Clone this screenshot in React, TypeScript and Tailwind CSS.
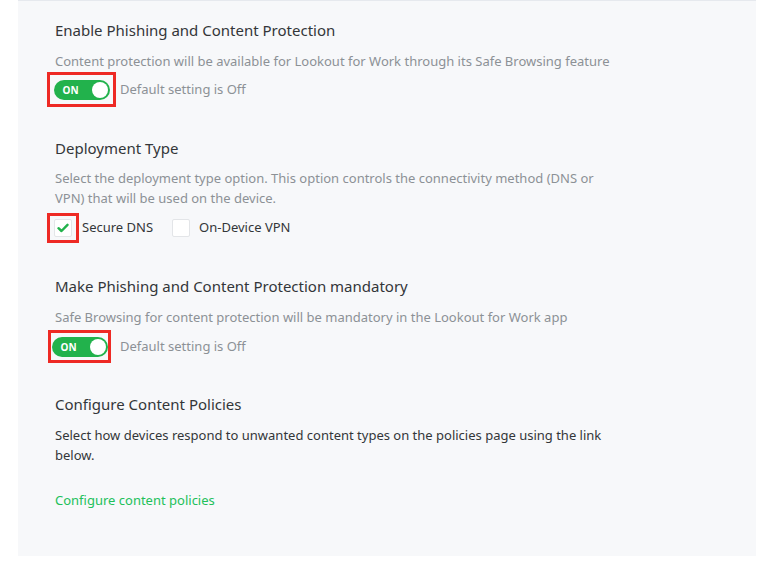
function Toggle() {
  return (
    <div className="flex h-[20px] w-[56px] items-center justify-between rounded-full bg-[#22b24c] pl-[9px] pr-[2px]">
      <span className="text-[10px] font-bold leading-none text-white">ON</span>
      <span className="h-[16px] w-[16px] rounded-full bg-white" />
    </div>
  );
}

function Highlight({ children, className }: { children: React.ReactNode; className: string }) {
  return <div className={`flex items-center justify-center border-[3px] border-[#ee2a24] ${className}`}>{children}</div>;
}

function Checkbox({ checked }: { checked?: boolean }) {
  return (
    <span className="flex h-[18px] w-[18px] items-center justify-center rounded-[2px] border border-[#e3e5e8] bg-white">
      {checked && (
        <svg width="12" height="10" viewBox="0 0 12 10">
          <path d="M1.5 5.2 L4.5 8 L10.5 1.8" fill="none" stroke="#22b24c" strokeWidth="2.4" strokeLinecap="round" strokeLinejoin="round" />
        </svg>
      )}
    </span>
  );
}

export default function App() {
  return (
    <div className="h-[564px] w-[768px] bg-white font-['Noto_Sans',sans-serif]">
      <div className="ml-[18px] h-[556px] w-[738px] border-t border-[#e6e9ee] bg-[#f7f8fa] pl-[37px] pt-[18px]">
        <section>
          <h2 className="text-[15px] leading-[22px] text-[#333639]">Enable Phishing and Content Protection</h2>
          <p className="mt-[10px] max-w-[560px] text-[13px] leading-[20px] text-[#8c9196]">
            Content protection will be available for Lookout for Work through its Safe Browsing feature
          </p>
          <div className="mt-[1px] flex items-center">
            <Highlight className="-ml-[8px] h-[35px] w-[69px]">
              <Toggle />
            </Highlight>
            <span className="ml-[4px] text-[13px] text-[#8c9196]">Default setting is Off</span>
          </div>
        </section>

        <section className="mt-[30px]">
          <h2 className="text-[15px] leading-[22px] text-[#333639]">Deployment Type</h2>
          <p className="mt-[9px] max-w-[560px] text-[13px] leading-[20px] text-[#8c9196]">
            Select the deployment type option. This option controls the connectivity method (DNS or VPN) that will be used on the device.
          </p>
          <div className="mt-[5px] flex items-center">
            <Highlight className="-ml-[8px] h-[30px] w-[32px]">
              <Checkbox checked />
            </Highlight>
            <span className="ml-[3px] text-[13px] text-[#333639]">Secure DNS</span>
            <span className="ml-[19px]">
              <Checkbox />
            </span>
            <span className="ml-[9px] text-[13px] text-[#333639]">On-Device VPN</span>
          </div>
        </section>

        <section className="mt-[32px]">
          <h2 className="text-[15px] leading-[22px] text-[#333639]">Make Phishing and Content Protection mandatory</h2>
          <p className="mt-[10px] max-w-[560px] text-[13px] leading-[20px] text-[#8c9196]">
            Safe Browsing for content protection will be mandatory in the Lookout for Work app
          </p>
          <div className="mt-[3px] flex items-center">
            <Highlight className="-ml-[7px] h-[33px] w-[63px]">
              <Toggle />
            </Highlight>
            <span className="ml-[9px] text-[13px] text-[#8c9196]">Default setting is Off</span>
          </div>
        </section>

        <section className="mt-[30px]">
          <h2 className="text-[15px] leading-[22px] text-[#333639]">Configure Content Policies</h2>
          <p className="mt-[10px] max-w-[560px] text-[13px] leading-[20px] text-[#333639]">
            Select how devices respond to unwanted content types on the policies page using the link below.
          </p>
          <a className="mt-[26px] block text-[13px] text-[#22c05a]">Configure content policies</a>
        </section>
      </div>
    </div>
  );
}
